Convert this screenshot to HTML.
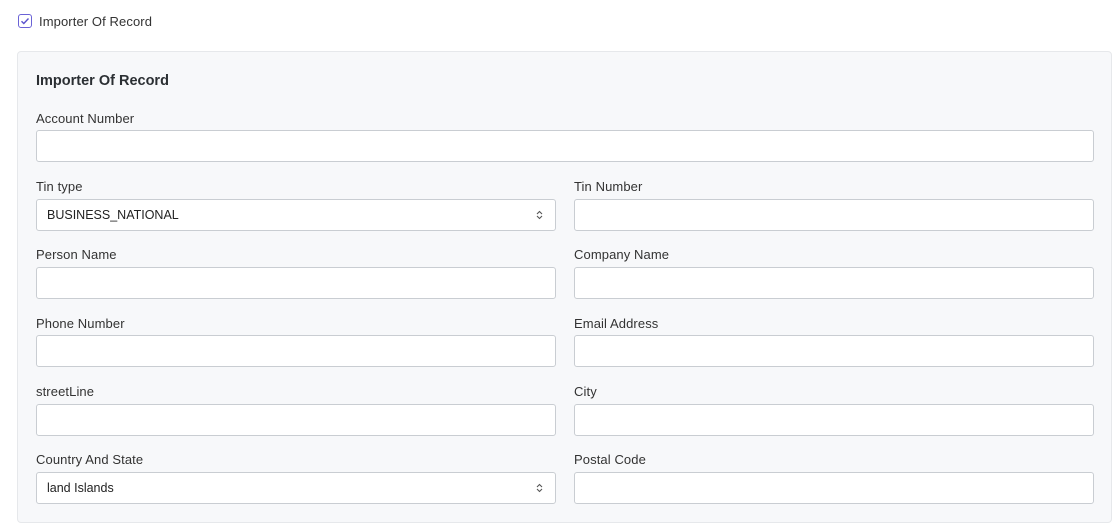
<!DOCTYPE html>
<html><head><style>
body{margin:0;width:1116px;height:528px;background:#fff;font-family:"Liberation Sans",sans-serif;color:#333;position:relative;overflow:hidden}
.cb{position:absolute;left:18px;top:14px;width:12px;height:12px;border:1px solid #6a62d6;border-radius:3px;background:#fff}
.t{position:absolute;font-size:13px;color:#333;letter-spacing:0.1px}
.panel{position:absolute;left:17px;top:51px;width:1095px;height:472px;background:#f7f8fa;border:1px solid #e6e8eb;border-radius:4px;box-sizing:border-box}
.h{position:absolute;left:36px;top:73px;font-size:14.5px;font-weight:bold;color:#2b2f33}
.in{position:absolute;height:32px;background:#fff;border:1px solid #c9cdd2;border-radius:3px;box-sizing:border-box;font-size:12.5px;color:#222;padding:8px 10px}
.L{left:36px;width:520px}.R{left:574px;width:520px}
.arr{position:absolute;right:12px;top:10px}
</style></head><body>
<div class="cb"><svg width="12" height="12" viewBox="0 0 12 12" style="position:absolute;left:0;top:0"><path d="M2.5 6.2l2.3 2.3 4.7-5" fill="none" stroke="#5a52cc" stroke-width="1.4"/></svg></div>
<div class="t" style="left:39px;top:14px">Importer Of Record</div>
<div class="panel"></div>
<div class="h">Importer Of Record</div>
<div class="t" style="left:36px;top:111px">Account Number</div>
<div class="in" style="left:36px;width:1058px;top:130px"></div>

<div class="t" style="left:36px;top:179px">Tin type</div>
<div class="t" style="left:574px;top:179px">Tin Number</div>
<div class="in L" style="top:199px">BUSINESS_NATIONAL<svg class="arr" width="7" height="10" viewBox="0 0 7 10"><path d="M1 4l2.5-2.5L6 4M1 6l2.5 2.5L6 6" fill="none" stroke="#555" stroke-width="1.1"/></svg></div>
<div class="in R" style="top:199px"></div>

<div class="t" style="left:36px;top:247px">Person Name</div>
<div class="t" style="left:574px;top:247px">Company Name</div>
<div class="in L" style="top:267px"></div>
<div class="in R" style="top:267px"></div>

<div class="t" style="left:36px;top:316px">Phone Number</div>
<div class="t" style="left:574px;top:316px">Email Address</div>
<div class="in L" style="top:335px"></div>
<div class="in R" style="top:335px"></div>

<div class="t" style="left:36px;top:384px">streetLine</div>
<div class="t" style="left:574px;top:384px">City</div>
<div class="in L" style="top:404px"></div>
<div class="in R" style="top:404px"></div>

<div class="t" style="left:36px;top:452px">Country And State</div>
<div class="t" style="left:574px;top:452px">Postal Code</div>
<div class="in L" style="top:472px">land Islands<svg class="arr" width="7" height="10" viewBox="0 0 7 10"><path d="M1 4l2.5-2.5L6 4M1 6l2.5 2.5L6 6" fill="none" stroke="#555" stroke-width="1.1"/></svg></div>
<div class="in R" style="top:472px"></div>
</body></html>
